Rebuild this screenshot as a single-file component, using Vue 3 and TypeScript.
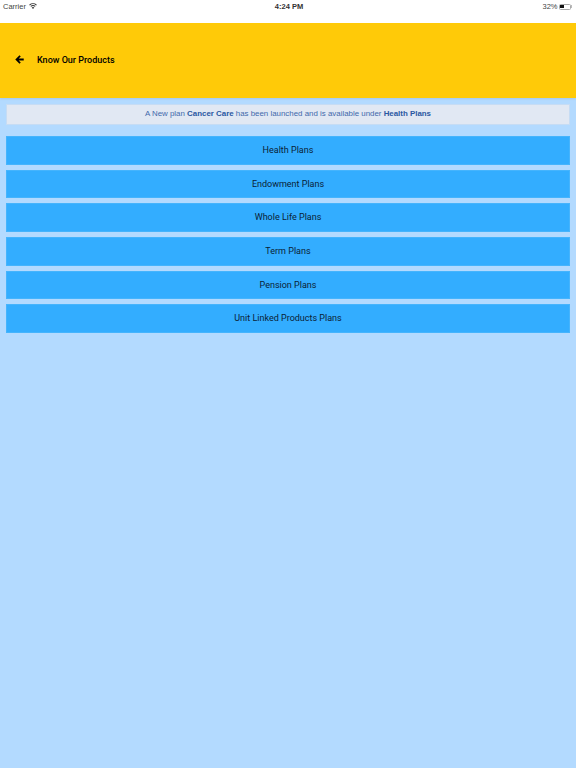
<script setup lang="ts">
const plans: string[] = [
  'Health Plans',
  'Endowment Plans',
  'Whole Life Plans',
  'Term Plans',
  'Pension Plans',
  'Unit Linked Products Plans',
]
</script>

<template>
  <div class="page">
    <div class="status">
      <div class="left">
        <span>Carrier</span>
        <svg class="wifi" width="8" height="6" viewBox="0 0 18 14">
          <path d="M9 14 L6 10.6 A4.6 4.6 0 0 1 12 10.6 Z" fill="#333" />
          <path d="M4.6 9 L3 7.2 A9 9 0 0 1 15 7.2 L13.4 9 A6.6 6.6 0 0 0 4.6 9 Z" fill="#333" />
          <path d="M1.7 5.8 L0 3.9 A13.4 13.4 0 0 1 18 3.9 L16.3 5.8 A11 11 0 0 0 1.7 5.8 Z" fill="#333" />
        </svg>
      </div>
      <span class="time">4:24 PM</span>
      <div class="right">
        <span>32%</span>
        <span class="battery"><span class="level"></span></span>
        <span class="nub"></span>
      </div>
    </div>
    <header class="bar">
      <svg class="back" width="9" height="9" viewBox="0 0 10 10">
        <path d="M5 0.3 L0.3 5 L5 9.7 L6.4 8.3 L4.1 6.1 H9.7 V3.9 H4.1 L6.4 1.7 Z" fill="#000" />
      </svg>
      <h1>Know Our Products</h1>
    </header>
    <main class="content">
      <p class="notice">
        A New plan <b>Cancer Care</b> has been launched and is available under <b>Health Plans</b>
      </p>
      <ul class="list">
        <li v-for="plan in plans" :key="plan">{{ plan }}</li>
      </ul>
    </main>
  </div>
</template>

<style>
html, body { margin: 0; padding: 0; }
</style>

<style scoped>
.page {
  width: 576px;
  height: 768px;
  display: flex;
  flex-direction: column;
  background: #b3daff;
  overflow: hidden;
}
.status {
  height: 23px;
  flex: none;
  background: #fff;
  display: flex;
  align-items: flex-start;
  justify-content: space-between;
  padding: 2px 4px 0 3px;
  box-sizing: border-box;
  font: 7.5px/9px "Liberation Sans", Arial, sans-serif;
  color: #444;
  position: relative;
}
.left, .right { display: flex; align-items: center; }
.wifi { margin-left: 3px; margin-top: -2px; }
.time {
  position: absolute;
  left: 2px;
  right: 0;
  text-align: center;
  font-weight: 700;
  color: #333;
}
.battery {
  width: 12.5px;
  height: 6px;
  margin-left: 1px;
  border: 0.5px solid #aaa;
  border-radius: 1.5px;
  padding: 0.5px;
  box-sizing: border-box;
  display: flex;
}
.level { width: 4px; background: #111; }
.nub { width: 1px; height: 3px; background: #bbb; }
.bar {
  height: 75px;
  flex: none;
  background: #ffca08;
  display: flex;
  align-items: center;
  padding-left: 14.5px;
  box-sizing: border-box;
  box-shadow: 0 1px 2px rgba(0, 0, 0, 0.08);
}
.back { flex: none; margin-top: -2px; }
.bar h1 {
  margin: -1px 0 0 13.5px;
  font: 500 9px/14px Roboto, "Liberation Sans", sans-serif;
  color: #000;
}
.content { flex: 1; padding: 5.5px 6px 0; }
.notice {
  margin: 0 0 11px;
  height: 21.5px;
  padding: 0;
  background: #e1e8f3;
  border: 1px solid #c6dcf4;
  box-sizing: border-box;
  text-align: center;
  font: 7.9px/18.5px "Liberation Sans", Arial, sans-serif;
  color: #3f68ab;
}
.notice b { color: #2a58a2; }
.list {
  margin: 0;
  padding: 0;
  list-style: none;
  display: flex;
  flex-direction: column;
  gap: 5px;
}
.list li {
  height: 28.7px;
  box-sizing: border-box;
  background: #33adff;
  border: 1px solid #45b4fd;
  text-align: center;
  font: 400 9px/26.7px Roboto, "Liberation Sans", sans-serif;
  color: #0a2236;
}
</style>
